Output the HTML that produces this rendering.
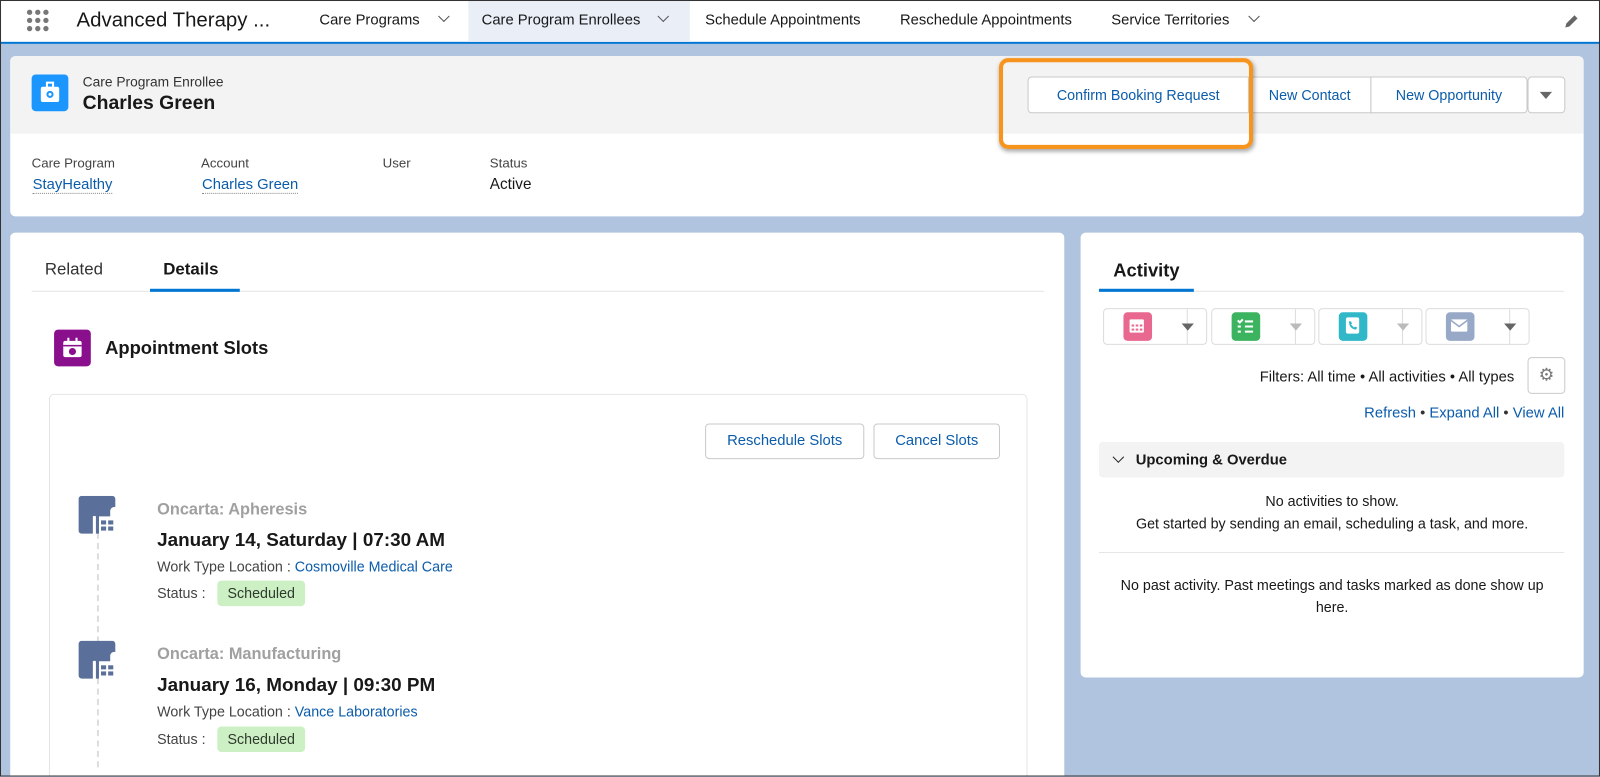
<!DOCTYPE html>
<html><head><meta charset="utf-8"><style>
*{box-sizing:border-box;margin:0;padding:0}
html,body{width:1600px;height:777px;overflow:hidden}
body{background:#b2c6e0;font-family:"Liberation Sans",sans-serif;color:#181818;position:relative}
#w{position:absolute;left:0;top:0;width:1568px;height:761px;transform:scale(1.0204);transform-origin:0 0;background:#b0c4df;overflow:hidden}
.a{position:absolute;white-space:nowrap}
.nav{position:absolute;left:0;top:0;width:1568px;height:43px;background:#fff;border-bottom:2px solid #0176d3}
.tab{position:absolute;top:0;height:41px;line-height:41px;font-size:14.5px;color:#181818}
.card{position:absolute;background:#fff;border-radius:5px}
.btn{position:absolute;border:1px solid #c9c9c9;background:#fff;color:#0b5cab;font-size:14px;text-align:center;border-radius:4px}
.lbl{font-size:13px;color:#444}
.lnk{color:#0b5cab;font-size:14.5px;border-bottom:1px dotted #888}
.chev{display:inline-block;width:8px;height:8px;border-right:1.5px solid #555;border-bottom:1.5px solid #555;transform:rotate(45deg)}
.tri{width:0;height:0;border-left:6px solid transparent;border-right:6px solid transparent;border-top:7px solid #666;position:absolute}
.ab{position:absolute;top:302px;height:36px;border:1px solid #dcdcdc;border-radius:4px;background:#fff}
.ab i{position:absolute;left:19px;top:3px;width:28px;height:28px;border-radius:4px}
.ab b{position:absolute;left:81px;top:0;height:34px;border-left:1px solid #dcdcdc}
</style></head><body><div id="w">
<div style="position:absolute;left:0;top:0;width:1568px;height:761px;border:1px solid #333;z-index:9;pointer-events:none"></div>
<div class="nav">
 <svg class="a" style="left:25px;top:9px" width="24" height="22"><g fill="#777"><circle cx="4" cy="3" r="2.6"/><circle cx="12" cy="3" r="2.6"/><circle cx="20" cy="3" r="2.6"/><circle cx="4" cy="11" r="2.6"/><circle cx="12" cy="11" r="2.6"/><circle cx="20" cy="11" r="2.6"/><circle cx="4" cy="19" r="2.6"/><circle cx="12" cy="19" r="2.6"/><circle cx="20" cy="19" r="2.6"/></g></svg>
 <div class="a" style="left:75px;top:9px;font-size:20px">Advanced Therapy ...</div>
 <div class="tab" style="left:313px">Care Programs <span class="chev" style="margin:0 0 4px 16px"></span></div>
 <div class="tab" style="left:459px;width:217px;background:#e9eef7;padding-left:13px">Care Program Enrollees <span class="chev" style="margin:0 0 4px 14px"></span></div>
 <div class="tab" style="left:691px">Schedule Appointments</div>
 <div class="tab" style="left:882px">Reschedule Appointments</div>
 <div class="tab" style="left:1089px">Service Territories <span class="chev" style="margin:0 0 4px 16px"></span></div>
 <svg class="a" style="left:1533px;top:14px" width="14" height="14"><path d="M1 13l1-4 8-8 3 3-8 8z" fill="#666"/></svg>
</div>

<div class="card" style="left:10px;top:55px;width:1542px;height:157px;overflow:hidden">
 <div style="position:absolute;left:0;top:0;right:0;height:76px;background:#f3f3f3"></div>
 <div class="a" style="left:21px;top:18px;width:36px;height:36px;background:#1b96ff;border-radius:4px"><svg width="36" height="36"><rect x="9" y="12" width="18" height="15" rx="2" fill="#fff"/><rect x="15" y="8" width="6" height="5" fill="none" stroke="#fff" stroke-width="2"/><circle cx="18" cy="19.5" r="3.5" fill="#1b96ff"/><circle cx="18" cy="19.5" r="1.5" fill="#fff"/></svg></div>
 <div class="a" style="left:71px;top:18px;font-size:13.5px;color:#333">Care Program Enrollee</div>
 <div class="a" style="left:71px;top:36px;font-size:19px;font-weight:bold">Charles Green</div>
 <div class="a lbl" style="left:21px;top:97px">Care Program</div>
 <div class="a lbl" style="left:187px;top:97px">Account</div>
 <div class="a lbl" style="left:365px;top:97px">User</div>
 <div class="a lbl" style="left:470px;top:97px">Status</div>
 <div class="a lnk" style="left:22px;top:118px">StayHealthy</div>
 <div class="a lnk" style="left:188px;top:118px">Charles Green</div>
 <div class="a" style="left:470px;top:117px;font-size:15px">Active</div>
</div>
<div class="btn" style="left:1007px;top:75px;width:217px;height:36px;line-height:34px;border-radius:4px 0 0 4px">Confirm Booking Request</div>
<div class="btn" style="left:1223px;top:75px;width:121px;height:36px;line-height:34px;border-radius:0">New Contact</div>
<div class="btn" style="left:1343px;top:75px;width:154px;height:36px;line-height:34px;border-radius:0 4px 4px 0">New Opportunity</div>
<div class="btn" style="left:1497px;top:75px;width:37px;height:36px"><div class="tri" style="left:11px;top:14px"></div></div>
<div class="a" style="left:979px;top:57px;width:249px;height:89px;border:4px solid #f7941d;border-radius:9px;box-shadow:1px 2px 4px rgba(0,0,0,.35)"></div>

<div class="card" style="left:10px;top:228px;width:1033px;height:540px;overflow:hidden">
 <div class="a" style="left:34px;top:27px;font-size:16.5px;color:#333">Related</div>
 <div class="a" style="left:150px;top:27px;font-size:16.5px;font-weight:bold">Details</div>
 <div class="a" style="left:21px;top:57px;width:992px;border-top:1px solid #e5e5e5"></div>
 <div class="a" style="left:137px;top:55px;width:88px;height:3px;background:#0176d3"></div>
 <div class="a" style="left:43px;top:95px;width:36px;height:36px;background:#8a0f8c;border-radius:4px"><svg width="36" height="36"><rect x="9" y="11" width="18" height="16" rx="2" fill="#fff"/><rect x="13" y="8" width="2" height="4" fill="#fff"/><rect x="21" y="8" width="2" height="4" fill="#fff"/><rect x="9" y="15" width="18" height="1.5" fill="#8a0f8c"/><circle cx="18" cy="21.5" r="3.5" fill="#8a0f8c"/></svg></div>
 <div class="a" style="left:93px;top:103px;font-size:18px;font-weight:bold">Appointment Slots</div>
 <div class="a" style="left:38px;top:158px;width:959px;height:380px;border:1px solid #e5e5e5;border-radius:5px">
  <div class="btn" style="left:642px;top:28px;width:156px;height:35px;line-height:33px;font-size:14.5px">Reschedule Slots</div>
  <div class="btn" style="left:807px;top:28px;width:124px;height:35px;line-height:33px;font-size:14.5px">Cancel Slots</div>
  <div class="a" style="left:46px;top:135px;height:230px;border-left:2px dashed #ddd"></div>
  <svg class="a" style="left:28px;top:99px" width="38" height="38"><path d="M3 0h30a3 3 0 0 1 3 3v8a4 4 0 0 0-5 4v5h-11v17h-3v-17a3 3 0 0 0-3 0v17h-11a3 3 0 0 1-3-3v-31a3 3 0 0 1 3-3z" fill="#5a6f99"/><g fill="#5a6f99"><rect x="22" y="24" width="5" height="4"/><rect x="29" y="24" width="5" height="4"/><rect x="22" y="30" width="5" height="4"/><rect x="29" y="30" width="5" height="4"/></g></svg>
  <div class="a" style="left:105px;top:104px;font-size:16px;font-weight:bold;color:#a0a0a0">Oncarta: Apheresis</div>
  <div class="a" style="left:105px;top:131px;font-size:18.5px;font-weight:bold">January 14, Saturday | 07:30 AM</div>
  <div class="a" style="left:105px;top:160px;font-size:14px;color:#444">Work Type Location : <span style="color:#0b5cab">Cosmoville Medical Care</span></div>
  <div class="a" style="left:105px;top:186px;font-size:14px;color:#444">Status :</div>
  <div class="a" style="left:164px;top:182px;width:86px;height:25px;line-height:25px;text-align:center;background:#cdefc4;border-radius:4px;font-size:14px;color:#2e3a2c">Scheduled</div>
  <svg class="a" style="left:28px;top:241px" width="38" height="38"><path d="M3 0h30a3 3 0 0 1 3 3v8a4 4 0 0 0-5 4v5h-11v17h-3v-17a3 3 0 0 0-3 0v17h-11a3 3 0 0 1-3-3v-31a3 3 0 0 1 3-3z" fill="#5a6f99"/><g fill="#5a6f99"><rect x="22" y="24" width="5" height="4"/><rect x="29" y="24" width="5" height="4"/><rect x="22" y="30" width="5" height="4"/><rect x="29" y="30" width="5" height="4"/></g></svg>
  <div class="a" style="left:105px;top:246px;font-size:16px;font-weight:bold;color:#a0a0a0">Oncarta: Manufacturing</div>
  <div class="a" style="left:105px;top:273px;font-size:18.5px;font-weight:bold">January 16, Monday | 09:30 PM</div>
  <div class="a" style="left:105px;top:302px;font-size:14px;color:#444">Work Type Location : <span style="color:#0b5cab">Vance Laboratories</span></div>
  <div class="a" style="left:105px;top:329px;font-size:14px;color:#444">Status :</div>
  <div class="a" style="left:164px;top:325px;width:86px;height:25px;line-height:25px;text-align:center;background:#cdefc4;border-radius:4px;font-size:14px;color:#2e3a2c">Scheduled</div>
 </div>
</div>

<div class="card" style="left:1059px;top:228px;width:493px;height:436px">
 <div class="a" style="left:32px;top:27px;font-size:18px;font-weight:bold">Activity</div>
 <div class="a" style="left:18px;top:57px;width:456px;border-top:1px solid #e5e5e5"></div>
 <div class="a" style="left:18px;top:55px;width:93px;height:3px;background:#0176d3"></div>
</div>
<div class="ab" style="left:1081px;width:102px"><i style="background:#e8688f"></i><b></b><div class="tri" style="left:76px;top:14px"></div></div>
<div class="ab" style="left:1187px;width:102px"><i style="background:#3cb45f"></i><b></b><div class="tri" style="left:76px;top:14px;border-top-color:#bbb"></div></div>
<div class="ab" style="left:1292px;width:102px"><i style="background:#31b8c8"></i><b></b><div class="tri" style="left:76px;top:14px;border-top-color:#bbb"></div></div>
<div class="ab" style="left:1397px;width:102px"><i style="background:#97a9c6"></i><b></b><div class="tri" style="left:76px;top:14px"></div></div>
<svg class="a" style="left:1100px;top:305px" width="28" height="28"><rect x="7" y="8" width="14" height="13" rx="1" fill="#fff"/><g fill="#e8688f"><rect x="9" y="13" width="2.5" height="2"/><rect x="13" y="13" width="2.5" height="2"/><rect x="17" y="13" width="2.5" height="2"/><rect x="9" y="17" width="2.5" height="2"/><rect x="13" y="17" width="2.5" height="2"/><rect x="17" y="17" width="2.5" height="2"/></g></svg>
<svg class="a" style="left:1206px;top:305px" width="28" height="28"><g stroke="#fff" stroke-width="2" fill="none"><path d="M7 9l2 2 3-3M14 10h8M14 15h8M14 20h8"/></g><rect x="7" y="14" width="3" height="2" fill="#fff"/><rect x="7" y="19" width="3" height="2" fill="#fff"/></svg>
<svg class="a" style="left:1311px;top:305px" width="28" height="28"><rect x="8" y="6" width="13" height="16" rx="2" fill="#fff"/><path d="M11 10c0 5 3 8 7 8l1-2-2-1-1 1c-1-1-2-2-3-3l1-1-1-2z" fill="#31b8c8"/></svg>
<svg class="a" style="left:1416px;top:305px" width="28" height="28"><rect x="6" y="8" width="16" height="12" rx="1" fill="#fff"/><path d="M6 9l8 6 8-6" stroke="#97a9c6" stroke-width="1.5" fill="none"/></svg>
<div class="a" style="left:1150px;top:362px;width:334px;text-align:right;font-size:14.5px">Filters: All time • All activities • All types</div>
<div class="btn" style="left:1497px;top:350px;width:37px;height:36px;color:#777;line-height:34px;font-size:17px">⚙</div>
<div class="a" style="left:1200px;top:397px;width:333px;text-align:right;font-size:14.5px;color:#0b5cab">Refresh <span style="color:#333">•</span> Expand All <span style="color:#333">•</span> View All</div>
<div class="a" style="left:1077px;top:433px;width:456px;height:35px;background:#f3f3f3;border-radius:4px"><span class="chev" style="position:absolute;left:15px;top:11px;border-color:#222"></span><span style="position:absolute;left:36px;top:10px;font-size:14.5px;font-weight:bold">Upcoming &amp; Overdue</span></div>
<div class="a" style="left:1059px;top:480px;width:493px;text-align:center;font-size:14px;line-height:22px">No activities to show.<br>Get started by sending an email, scheduling a task, and more.</div>
<div class="a" style="left:1077px;top:541px;width:456px;border-top:1px solid #e5e5e5"></div>
<div class="a" style="left:1059px;top:562px;width:493px;text-align:center;font-size:14px;line-height:22px">No past activity. Past meetings and tasks marked as done show up<br>here.</div>
</div></body></html>
